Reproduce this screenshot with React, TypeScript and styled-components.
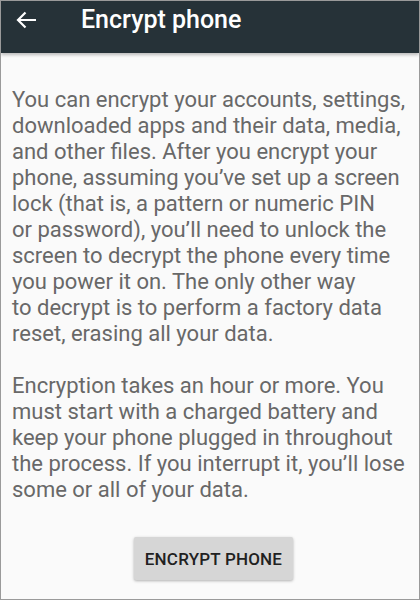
import styled, { createGlobalStyle } from 'styled-components';

const GlobalStyle = createGlobalStyle`
  html, body {
    margin: 0;
    padding: 0;
    background: #fafafa;
  }
  * {
    box-sizing: border-box;
  }
`;

const Screen = styled.div`
  width: 420px;
  height: 600px;
  border: 1px solid #9a9a9a;
  background: #fafafa;
  display: flex;
  flex-direction: column;
  overflow: hidden;
  font-family: Roboto, 'Noto Sans', sans-serif;
`;

const Toolbar = styled.div`
  height: 52px;
  flex-shrink: 0;
  background: #263238;
  display: flex;
  align-items: flex-start;
  padding: 4px 0 0 15px;
  box-shadow: 0 2px 3px rgba(0, 0, 0, 0.25);
  position: relative;
  z-index: 1;
`;

const BackButton = styled.button`
  width: 22px;
  height: 30px;
  border: none;
  background: none;
  padding: 0;
  display: flex;
  align-items: center;
  color: #ffffff;
  margin-right: 43px;
`;

const Title = styled.h1`
  margin: 0;
  font-size: 25px;
  line-height: 30px;
  font-weight: 500;
  color: #ffffff;
`;

const Content = styled.div`
  flex: 1;
  padding: 34px 0 0 11px;
  display: flex;
  flex-direction: column;
  gap: 26px;
`;

const Paragraph = styled.p`
  margin: 0;
  font-size: 22px;
  line-height: 26px;
  color: #686868;
  white-space: nowrap;
`;

const ButtonRow = styled.div`
  display: flex;
  justify-content: center;
  padding: 8px 4px 0 0;
`;

const RaisedButton = styled.button`
  width: 159px;
  height: 43px;
  border: none;
  border-radius: 2px;
  background: #d6d6d6;
  box-shadow: 0 1px 3px rgba(0, 0, 0, 0.3);
  font-family: Roboto, sans-serif;
  font-size: 17px;
  font-weight: 500;
  color: #212121;
  letter-spacing: 0.2px;
`;

const intro = [
  'You can encrypt your accounts, settings,',
  'downloaded apps and their data, media,',
  'and other files. After you encrypt your',
  'phone, assuming you’ve set up a screen',
  'lock (that is, a pattern or numeric PIN',
  'or password), you’ll need to unlock the',
  'screen to decrypt the phone every time',
  'you power it on. The only other way',
  'to decrypt is to perform a factory data',
  'reset, erasing all your data.',
];

const warning = [
  'Encryption takes an hour or more. You',
  'must start with a charged battery and',
  'keep your phone plugged in throughout',
  'the process. If you interrupt it, you’ll lose',
  'some or all of your data.',
];

function Lines({ lines }: { lines: string[] }) {
  return (
    <Paragraph>
      {lines.map((line, i) => (
        <span key={i}>
          {line}
          {i < lines.length - 1 && <br />}
        </span>
      ))}
    </Paragraph>
  );
}

function BackArrow() {
  return (
    <svg width="21" height="18" viewBox="0 0 21 18" fill="none" stroke="currentColor" strokeWidth="2.2">
      <path d="M20 9H2M9.5 1.5L2 9l7.5 7.5" />
    </svg>
  );
}

export default function App() {
  return (
    <>
      <GlobalStyle />
      <Screen>
        <Toolbar>
          <BackButton aria-label="Back">
            <BackArrow />
          </BackButton>
          <Title>Encrypt phone</Title>
        </Toolbar>
        <Content>
          <Lines lines={intro} />
          <Lines lines={warning} />
          <ButtonRow>
            <RaisedButton>ENCRYPT PHONE</RaisedButton>
          </ButtonRow>
        </Content>
      </Screen>
    </>
  );
}
